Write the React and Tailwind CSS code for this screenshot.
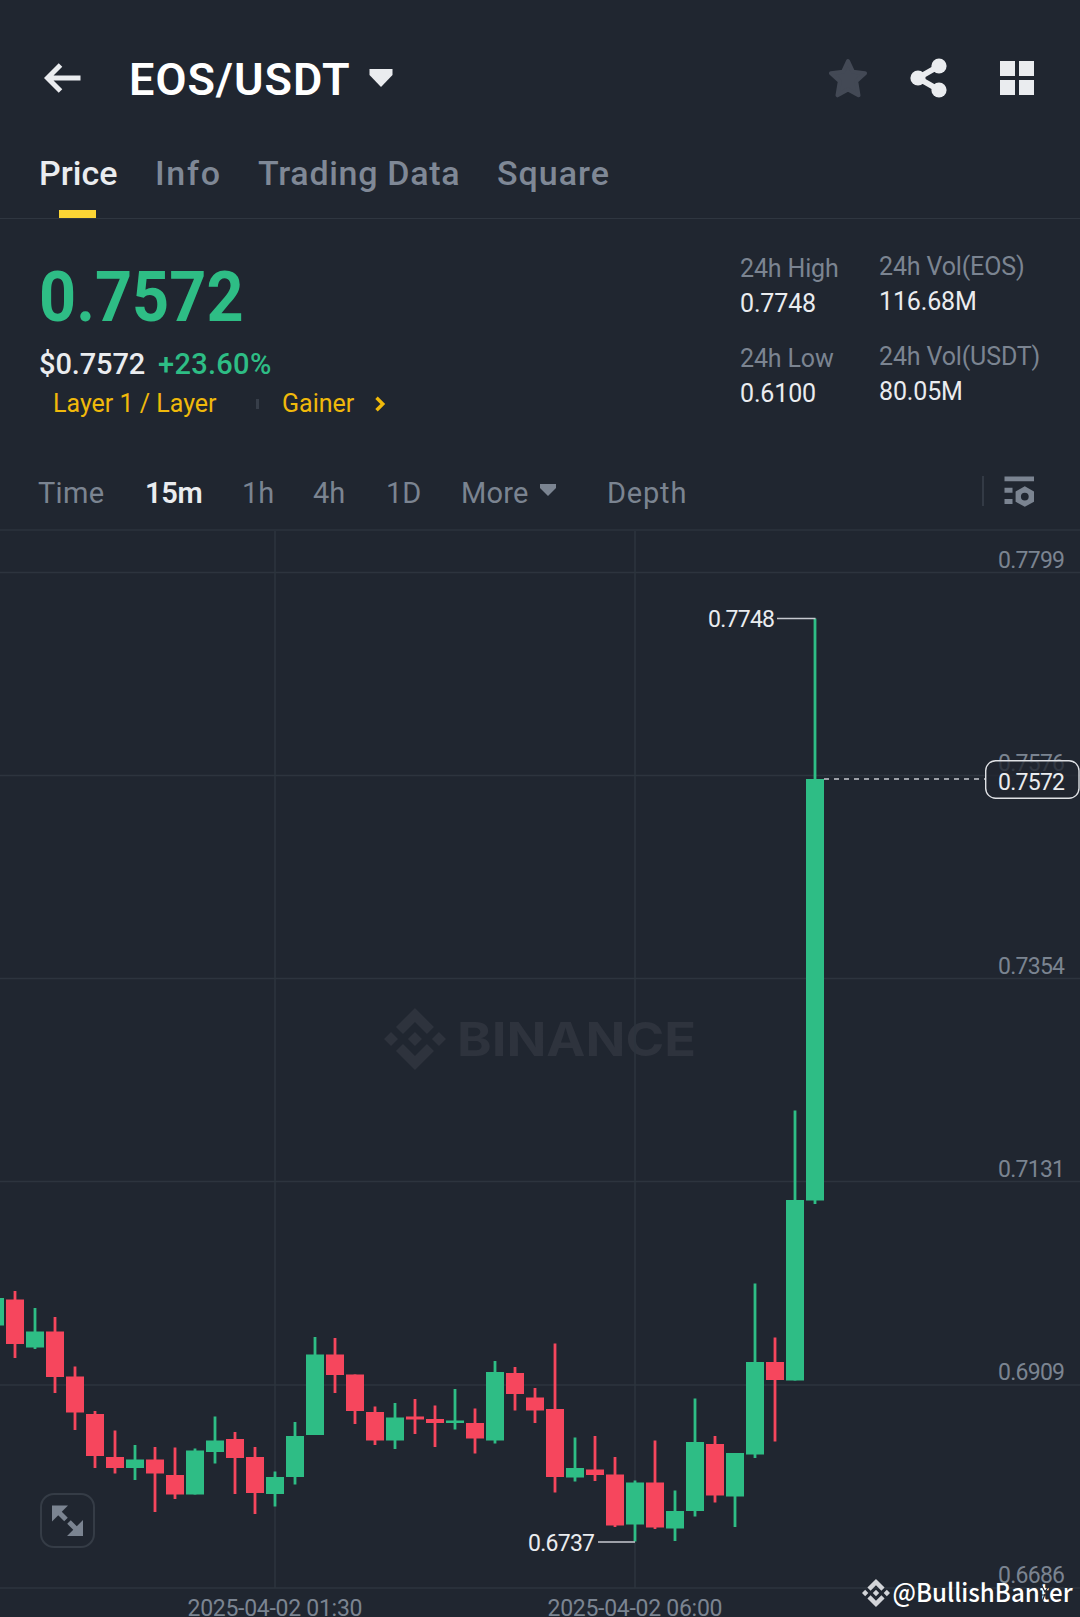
import React from 'react';
import { SiBinance } from 'react-icons/si';

const GREEN = '#2ebd85';
const RED = '#f6465d';

// [x, color, high, top, bottom, low]
const candles = [
  [-5, GREEN, 1298, 1298, 1325.5, 1325.5],
  [15, RED, 1291, 1299.5, 1344, 1358],
  [35, GREEN, 1308, 1331.5, 1347.5, 1349],
  [55, RED, 1317, 1331.5, 1377, 1393],
  [75, RED, 1366.5, 1376.5, 1412.5, 1430],
  [95, RED, 1411, 1414, 1456, 1468],
  [115, RED, 1430.5, 1457, 1468, 1473.5],
  [135, GREEN, 1445, 1459.5, 1468, 1480],
  [155, RED, 1447, 1459.5, 1473.5, 1512],
  [175, RED, 1447.5, 1475, 1494.5, 1499],
  [195, GREEN, 1448.5, 1450.5, 1494.5, 1494.5],
  [215, GREEN, 1416.5, 1440.5, 1452, 1463.5],
  [235, RED, 1432, 1439, 1458, 1494],
  [255, RED, 1447, 1457, 1493, 1514],
  [275, GREEN, 1471.5, 1477, 1494, 1506.5],
  [295, GREEN, 1422, 1436, 1477, 1484.5],
  [315, GREEN, 1337, 1354.5, 1435, 1435],
  [335, RED, 1338, 1354.5, 1375, 1393],
  [355, RED, 1374.5, 1374.5, 1411, 1424],
  [375, RED, 1406.5, 1412, 1440.5, 1445],
  [395, GREEN, 1403, 1417.5, 1440.5, 1449],
  [415, RED, 1399, 1416.5, 1419.5, 1434],
  [435, RED, 1405.5, 1419, 1423, 1447],
  [455, GREEN, 1389, 1420.5, 1423, 1429.5],
  [475, RED, 1408.5, 1423, 1438.5, 1453.5],
  [495, GREEN, 1361, 1372, 1440.5, 1443.5],
  [515, RED, 1367, 1373, 1394, 1410.5],
  [535, RED, 1388, 1397.5, 1410.5, 1423],
  [555, RED, 1343.5, 1409, 1477, 1492.5],
  [575, GREEN, 1437.5, 1468, 1477.5, 1481.5],
  [595, RED, 1436, 1469.5, 1475, 1481],
  [615, RED, 1457, 1474.5, 1525.5, 1527],
  [635, GREEN, 1480.5, 1482.5, 1524.5, 1541.5],
  [655, RED, 1440.5, 1482.5, 1527.5, 1529],
  [675, GREEN, 1490.5, 1511, 1528.5, 1541],
  [695, GREEN, 1398.5, 1442, 1511, 1516.5],
  [715, RED, 1436, 1444, 1495.5, 1502.5],
  [735, GREEN, 1453, 1453, 1496.5, 1527],
  [755, GREEN, 1283.5, 1362, 1454.5, 1458],
  [775, RED, 1337.5, 1362, 1380, 1441.5],
  [795, GREEN, 1110.5, 1200, 1380.5, 1380.5],
  [815, GREEN, 618.5, 779, 1200.5, 1204],
];

const priceLevels = [
  { y: 572.5, label: '0.7799' },
  { y: 775.5, label: '0.7576' },
  { y: 978.5, label: '0.7354' },
  { y: 1181.5, label: '0.7131' },
  { y: 1385, label: '0.6909' },
  { y: 1588, label: '0.6686' },
];

const Stat = ({ label, value }) => (
  <div>
    <p className="text-[25px] leading-[36px] text-[#7b8491] whitespace-nowrap tracking-[-0.15px]">{label}</p>
    <p className="text-[25px] leading-[33px] pb-[2px] text-[#eaecef] tracking-[-0.15px]">{value}</p>
  </div>
);

const Header = () => (
  <header className="flex items-center h-[130px] pt-[26px] pl-[44px] pr-[46px]">
    <svg className="w-[37px] h-[30px]" viewBox="0 0 37 30" fill="none" stroke="#eaecef" strokeWidth="5">
      <path d="M36.5 15H4M16.5 2L3.5 15l13 13" />
    </svg>
    <h1 className="ml-[48px] text-[45px] leading-[50px] font-semibold text-white pt-[4px] w-[221px] tracking-[1px] whitespace-nowrap">
      EOS/USDT
    </h1>
    <svg className="ml-[19px] w-6 h-[18px]" viewBox="0 0 24 18" fill="#eaecef">
      <path d="M0.5 0h23v6L12 18 0.5 6z" />
    </svg>
    <div className="flex items-center ml-auto">
      <svg className="w-[38px] h-[40px]" viewBox="0 0 38 40" fill="#434955" stroke="#434955" strokeWidth="4" strokeLinejoin="round">
        <path d="M19 3l5 10.8 12 1.4-8.8 8.1 2.3 14L19 31.5 8.5 37.3l2.3-14L2 15.2l12-1.4z" />
      </svg>
      <svg className="ml-[43px] w-[37px] h-[40px]" viewBox="0 0 37 40" fill="#eaecef">
        <path d="M8 20L29 8M8 20l21 12" stroke="#eaecef" strokeWidth="5.5" />
        <circle cx="8" cy="20" r="7.6" />
        <circle cx="29" cy="8" r="7.6" />
        <circle cx="29" cy="32" r="7.6" />
      </svg>
      <div className="ml-[53px] grid grid-cols-2 gap-1">
        <div className="w-[15px] h-[15px] bg-[#eaecef]"></div>
        <div className="w-[15px] h-[15px] bg-[#eaecef]"></div>
        <div className="w-[15px] h-[15px] bg-[#eaecef]"></div>
        <div className="w-[15px] h-[15px] bg-[#eaecef]"></div>
      </div>
    </div>
  </header>
);

const Tabs = () => (
  <nav className="flex h-[89px] pt-[23px] pl-[39px] border-b border-[#2f3640] text-[34px] leading-[40px] font-medium text-[#7f8896] whitespace-nowrap">
    <div className="relative w-[116px] text-[#eaecef]">
      Price
      <span className="absolute left-5 top-[57px] w-[37px] h-2 bg-[#fcd535]"></span>
    </div>
    <div className="w-[103px] tracking-[1.7px]">Info</div>
    <div className="w-[239px] tracking-[0.7px]">Trading Data</div>
    <div className="tracking-[1px]">Square</div>
  </nav>
);

const Summary = () => (
  <section className="flex h-[238px]">
    <div className="w-[740px] pt-[43px] pl-[39px]">
      <p className="text-[70px] leading-[70px] font-bold text-[#2ebd85] origin-left scale-x-[0.925]">0.7572</p>
      <div className="flex mt-[14px] text-[29px] leading-[36px] font-medium">
        <span className="w-[119px] text-[#eaecef] tracking-[-0.1px]">$0.7572</span>
        <span className="text-[#2ebd85] tracking-[0.3px]">+23.60%</span>
      </div>
      <div className="flex items-center mt-[7px] text-[25px] leading-[30px] text-[#f0b90b]">
        <span className="ml-[14px] w-[203px]">Layer 1 / Layer</span>
        <span className="w-[3px] h-[10px] bg-[#373e49]"></span>
        <span className="ml-[23px] w-[92px]">Gainer</span>
        <svg className="w-[12px] h-4" viewBox="0 0 12 16" fill="none" stroke="#f0b90b" strokeWidth="3.4">
          <path d="M2.5 1.7L8.8 8l-6.3 6.3" />
        </svg>
      </div>
    </div>
    <div className="w-[139px] pt-[32px] flex flex-col gap-[19px]">
      <Stat label="24h High" value="0.7748" />
      <Stat label="24h Low" value="0.6100" />
    </div>
    <div className="pt-[30px] flex flex-col gap-[19px]">
      <Stat label="24h Vol(EOS)" value="116.68M" />
      <Stat label="24h Vol(USDT)" value="80.05M" />
    </div>
  </section>
);

const Intervals = () => (
  <div className="flex items-center h-[74px] pt-[2px] pl-[38px] pr-[45px] border-b-2 border-[#282f39] text-[29px] text-[#7b8491] whitespace-nowrap">
    <span className="w-[107px] tracking-[0.3px]">Time</span>
    <span className="w-[97px] font-semibold text-[#eaecef] tracking-[-0.3px]">15m</span>
    <span className="w-[71px]">1h</span>
    <span className="w-[73px]">4h</span>
    <span className="w-[75px]">1D</span>
    <span className="w-[79px] tracking-[0.2px]">More</span>
    <svg className="w-4 h-3 mb-[9px]" viewBox="0 0 16 12" fill="#7b8491">
      <path d="M0 0h16v4L8 12 0 4z" />
    </svg>
    <span className="ml-[51px] tracking-[0.8px]">Depth</span>
    <span className="ml-auto mb-[6px] w-[2px] h-[30px] bg-[#333a45]"></span>
    <svg className="ml-[20px] mb-[6px] w-[31px] h-[31px]" viewBox="0 0 31 31" fill="#7b8491">
      <path d="M0.5 0.5h29.5v4.8h-29.5zM0.5 11.8h8v5h-8zM0.5 23h8v5h-8z" />
      <path fillRule="evenodd" d="M20.8 10.3l9.2 5.1v10.3l-9.2 5.1-9.2-5.1V15.4zM20.8 16.7a3.9 3.9 0 100 7.8 3.9 3.9 0 000-7.8z" />
    </svg>
  </div>
);

const Chart = () => (
  <svg className="block w-[1080px] h-[1086px]" viewBox="0 531 1080 1086" fontSize="23" fill="#7b8491">
    {/* watermark */}
    <g fill="#2e333d">
      <SiBinance x="384" y="1008" size="62" color="#2e333d" />
      <text x="457" y="1056" fontSize="47" fontWeight="700" textLength="239" lengthAdjust="spacingAndGlyphs" className="font-[Inter,sans-serif]">BINANCE</text>
    </g>

    {/* grid */}
    <g stroke="#2d343e" strokeWidth="1.5">
      {priceLevels.map((p) => (
        <line key={p.label} x1="0" x2="1080" y1={p.y} y2={p.y} />
      ))}
      <line x1="275" x2="275" y1="531" y2="1588" />
      <line x1="635" x2="635" y1="531" y2="1588" />
    </g>
    {priceLevels.map((p) => (
      <text key={p.label} x="998" y={p.y - 5} textLength="67">{p.label}</text>
    ))}
    <text x="187.5" y="1616" textLength="175">2025-04-02 01:30</text>
    <text x="547.5" y="1616" textLength="175">2025-04-02 06:00</text>

    {/* candles */}
    {candles.map(([x, color, high, top, bottom, low]) => (
      <g key={x} fill={color}>
        <rect x={x - 1.4} y={high} width="2.8" height={low - high} />
        <rect x={x - 9} y={top} width="18" height={bottom - top} />
      </g>
    ))}

    {/* high / low markers */}
    <g fill="#eaecef" stroke="none">
      <text x="708" y="627" textLength="67">0.7748</text>
      <text x="528" y="1551" textLength="67">0.6737</text>
    </g>
    <path d="M777 618.5h38.5M598 1542h37" stroke="#c6c9cf" strokeWidth="1.5" />

    {/* current price */}
    <path d="M824 779h161" stroke="#c6c9cf" strokeWidth="1.5" strokeDasharray="5 5" />
    <rect x="985.7" y="760.7" width="93.3" height="37.6" rx="10" fill="#202630" fillOpacity="0.8" stroke="#dfe1e5" strokeWidth="1.4" />
    <text x="998" y="790" fill="#eaecef" textLength="67">0.7572</text>

    {/* fullscreen button */}
    <rect x="41" y="1494" width="53" height="53" rx="13" fill="none" stroke="#353c46" strokeWidth="2" />
    <path d="M52 1505.5h16l-16 16zM83 1536h-16l16-16z" />
    <path d="M57 1510.5l9 9M78 1531l-9-9" stroke="#7b8491" strokeWidth="5" />

    {/* author */}
    <SiBinance x="862" y="1579" size="28" color="#d2d4d8" />
    <text x="892.5" y="1602" fontSize="25" fontWeight="500" fill="#fff" textLength="180" lengthAdjust="spacingAndGlyphs" className="font-['Noto_Sans_CJK_SC',sans-serif]">@BullishBanter</text>
    <path d="M1042 1586l3 6 3-5M1042 1602l3-8M1041 1595h7" fill="none" stroke="#202630" strokeWidth="1.2" />
  </svg>
);

function App() {
  return (
    <main className="w-[1080px] h-[1617px] overflow-hidden bg-[#202630] font-[Roboto,sans-serif]">
      <Header />
      <Tabs />
      <Summary />
      <Intervals />
      <Chart />
    </main>
  );
}

export default App;
